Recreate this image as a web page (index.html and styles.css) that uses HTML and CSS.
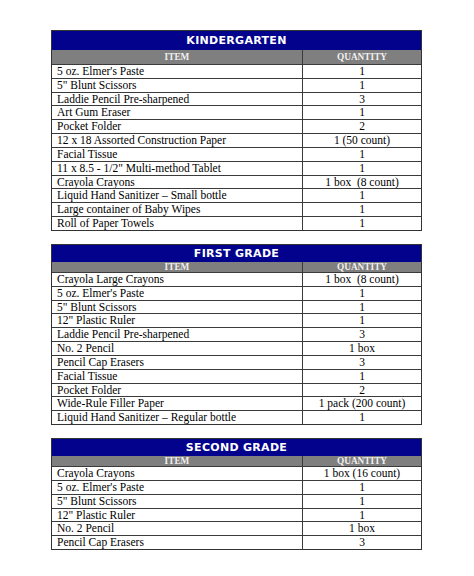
FILE: index.html
```html
<!DOCTYPE html>
<html lang="en">
<head>
<meta charset="utf-8">
<title>School Supply List</title>
<link rel="stylesheet" href="styles.css">
</head>
<body>
<main class="sheet">
  <section class="list list-k">
    <div class="title">KINDERGARTEN</div>
    <div class="row head"><div class="c item">ITEM</div><div class="c qty">QUANTITY</div></div>
    <div class="row"><div class="c item">5 oz. Elmer's Paste</div><div class="c qty">1</div></div>
    <div class="row"><div class="c item">5" Blunt Scissors</div><div class="c qty">1</div></div>
    <div class="row"><div class="c item">Laddie Pencil Pre-sharpened</div><div class="c qty">3</div></div>
    <div class="row"><div class="c item">Art Gum Eraser</div><div class="c qty">1</div></div>
    <div class="row"><div class="c item">Pocket Folder</div><div class="c qty">2</div></div>
    <div class="row"><div class="c item">12 x 18 Assorted Construction Paper</div><div class="c qty">1 (50 count)</div></div>
    <div class="row"><div class="c item">Facial Tissue</div><div class="c qty">1</div></div>
    <div class="row"><div class="c item">11 x 8.5 - 1/2" Multi-method Tablet</div><div class="c qty">1</div></div>
    <div class="row"><div class="c item">Crayola Crayons</div><div class="c qty">1 box&nbsp; (8 count)</div></div>
    <div class="row"><div class="c item">Liquid Hand Sanitizer – Small bottle</div><div class="c qty">1</div></div>
    <div class="row"><div class="c item">Large container of Baby Wipes</div><div class="c qty">1</div></div>
    <div class="row"><div class="c item">Roll of Paper Towels</div><div class="c qty">1</div></div>
  </section>

  <section class="list">
    <div class="title">FIRST GRADE</div>
    <div class="row head"><div class="c item">ITEM</div><div class="c qty">QUANTITY</div></div>
    <div class="row"><div class="c item">Crayola Large Crayons</div><div class="c qty">1 box&nbsp; (8 count)</div></div>
    <div class="row"><div class="c item">5 oz. Elmer's Paste</div><div class="c qty">1</div></div>
    <div class="row"><div class="c item">5" Blunt Scissors</div><div class="c qty">1</div></div>
    <div class="row"><div class="c item">12" Plastic Ruler</div><div class="c qty">1</div></div>
    <div class="row"><div class="c item">Laddie Pencil Pre-sharpened</div><div class="c qty">3</div></div>
    <div class="row"><div class="c item">No. 2 Pencil</div><div class="c qty">1 box</div></div>
    <div class="row"><div class="c item">Pencil Cap Erasers</div><div class="c qty">3</div></div>
    <div class="row"><div class="c item">Facial Tissue</div><div class="c qty">1</div></div>
    <div class="row"><div class="c item">Pocket Folder</div><div class="c qty">2</div></div>
    <div class="row"><div class="c item">Wide-Rule Filler Paper</div><div class="c qty">1 pack (200 count)</div></div>
    <div class="row"><div class="c item">Liquid Hand Sanitizer – Regular bottle</div><div class="c qty">1</div></div>
  </section>

  <section class="list">
    <div class="title">SECOND GRADE</div>
    <div class="row head"><div class="c item">ITEM</div><div class="c qty">QUANTITY</div></div>
    <div class="row"><div class="c item">Crayola Crayons</div><div class="c qty">1 box (16 count)</div></div>
    <div class="row"><div class="c item">5 oz. Elmer's Paste</div><div class="c qty">1</div></div>
    <div class="row"><div class="c item">5" Blunt Scissors</div><div class="c qty">1</div></div>
    <div class="row"><div class="c item">12" Plastic Ruler</div><div class="c qty">1</div></div>
    <div class="row"><div class="c item">No. 2 Pencil</div><div class="c qty">1 box</div></div>
    <div class="row"><div class="c item">Pencil Cap Erasers</div><div class="c qty">3</div></div>
  </section>
</main>
</body>
</html>
```

FILE: styles.css
```css
html, body {
  margin: 0;
  padding: 0;
  background: #ffffff;
}

.sheet {
  display: flex;
  flex-direction: column;
  gap: 13px;
  padding: 30px 0 0 51px;
}

.list {
  width: 371px;
  box-sizing: border-box;
  border: 1px solid #333333;
  font-family: "Liberation Serif", "Times New Roman", serif;
  color: #000000;
}

.title {
  height: 17px;
  background: #02028c;
  color: #ffffff;
  font-family: "DejaVu Sans", Verdana, sans-serif;
  font-weight: bold;
  font-size: 11px;
  letter-spacing: 0.3px;
  line-height: 17px;
  text-align: center;
}

.list-k .title {
  height: 19px;
  line-height: 19px;
}

.row {
  display: grid;
  grid-template-columns: 251px 1fr;
  height: 13.83px;
  box-sizing: border-box;
  border-top: 1px solid #3a3a3a;
  font-size: 11.5px;
  line-height: 11.83px;
  white-space: nowrap;
}

.row .c {
  padding-top: 1px;
}

.row.head {
  height: 10px;
  border-top: none;
  background: #7f7f7f;
  color: #f0f0f0;
  font-weight: bold;
  font-size: 9.3px;
  line-height: 10px;
}

.row.head .c {
  padding-top: 0;
}

.list-k .row.head {
  height: 14px;
  line-height: 14px;
}

.c {
  box-sizing: border-box;
  overflow: hidden;
}

.item {
  border-right: 1px solid #3a3a3a;
  padding-left: 5px;
}

.head .item {
  padding-left: 0;
  text-align: center;
}

.qty {
  text-align: center;
}
```
